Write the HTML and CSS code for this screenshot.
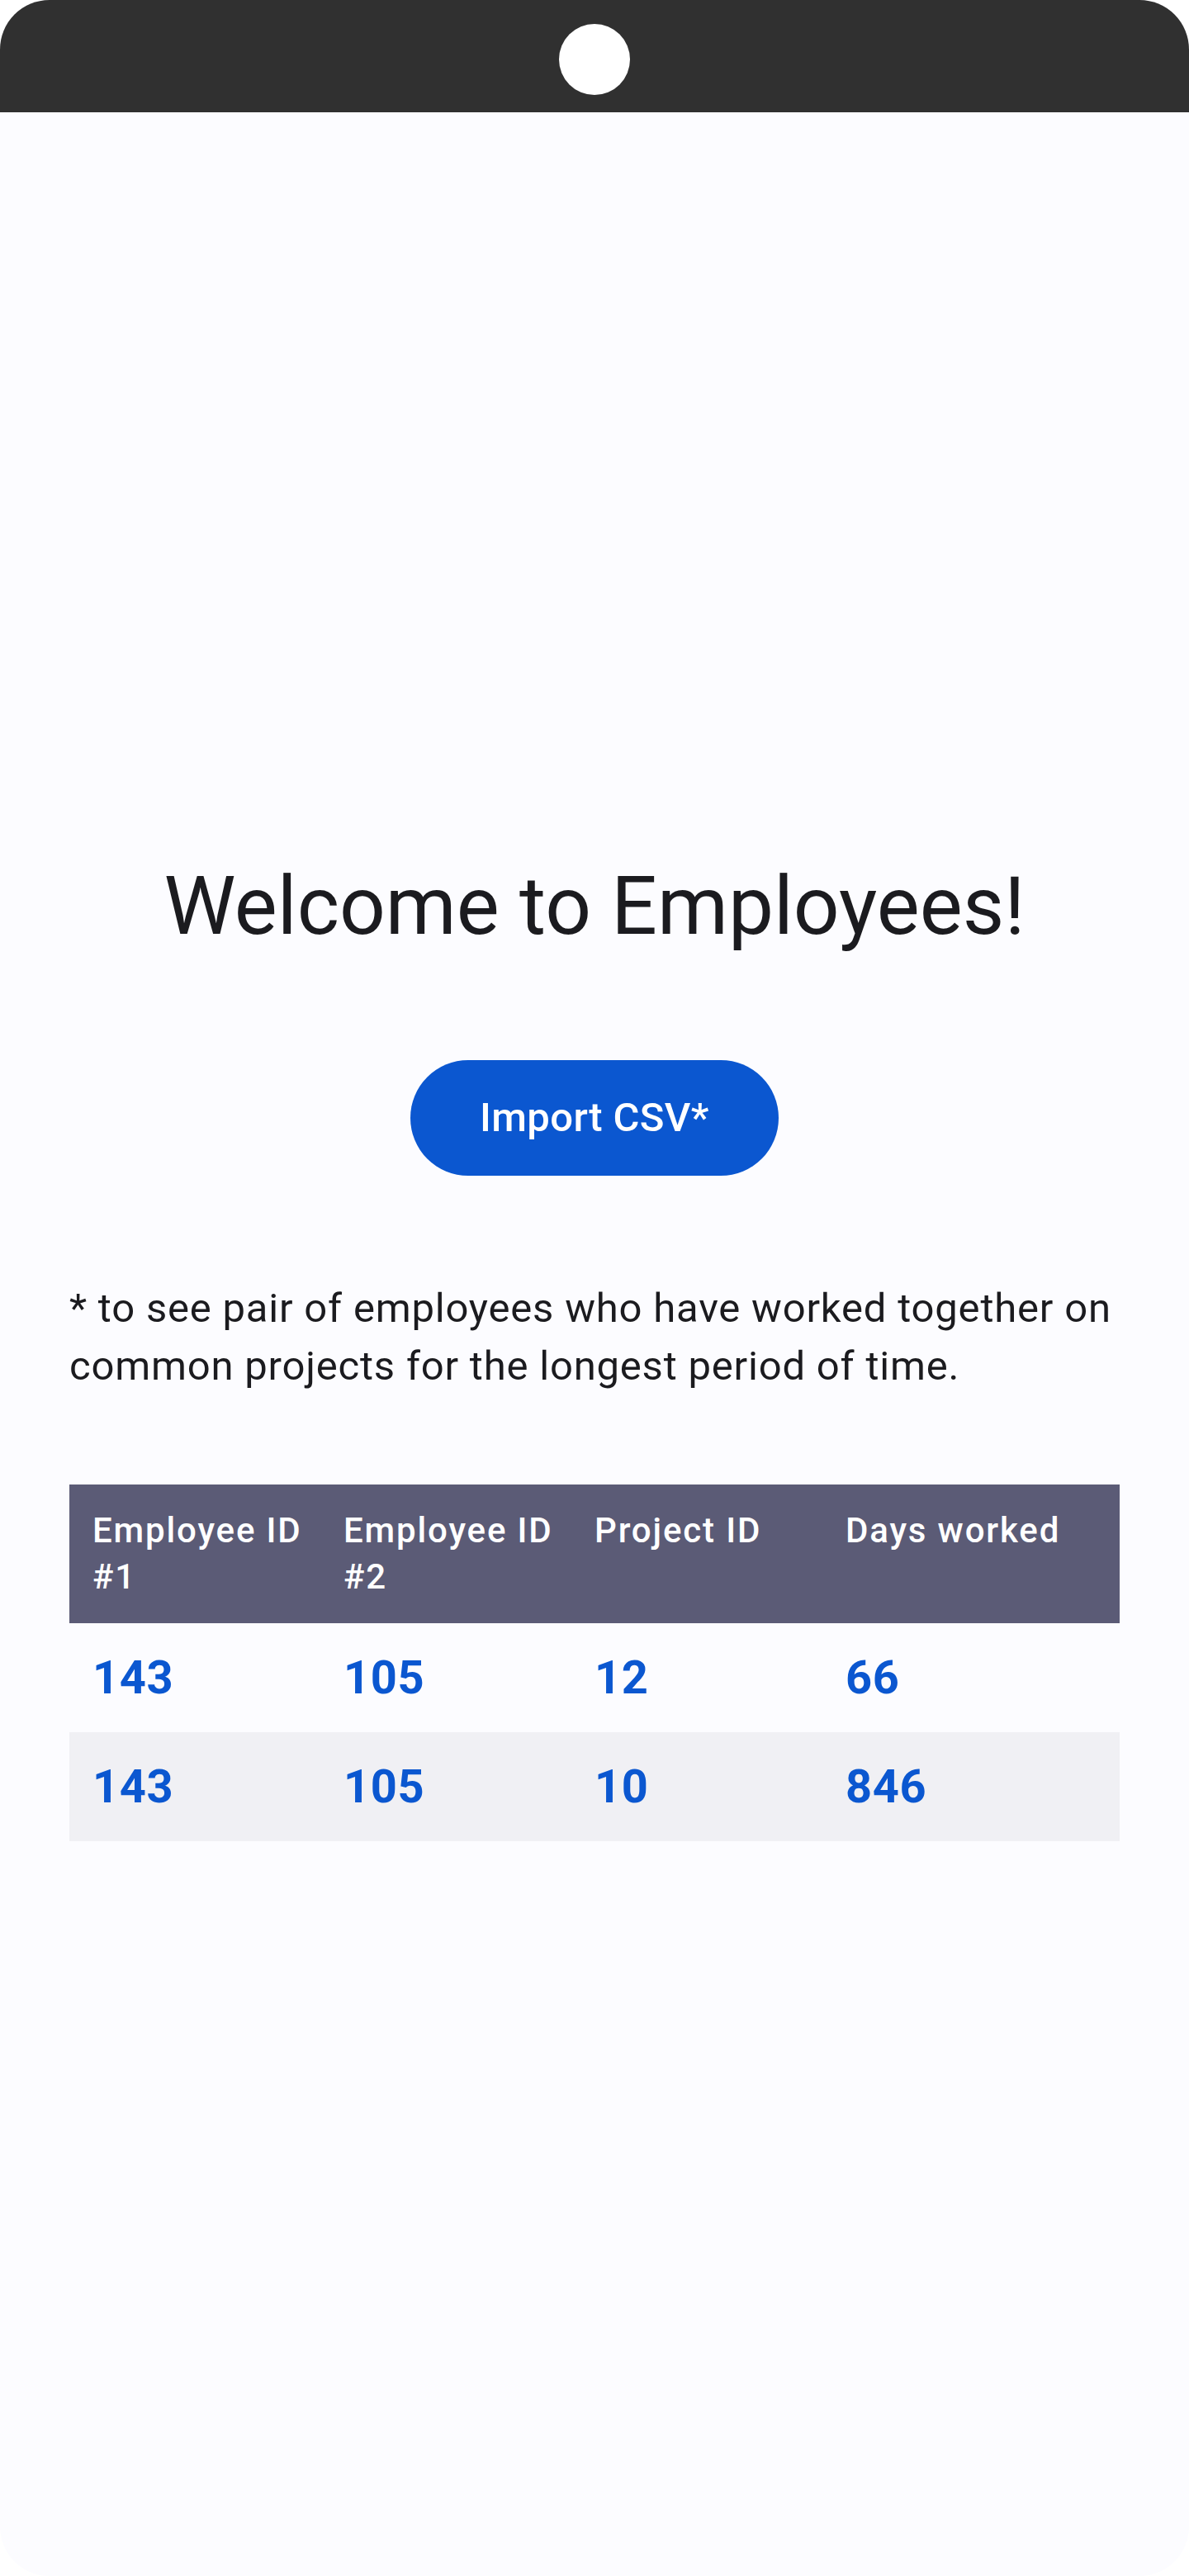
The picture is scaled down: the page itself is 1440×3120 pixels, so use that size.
FILE: index.html
```html
<!DOCTYPE html>
<html lang="en">
<head>
  <meta charset="UTF-8">
  <meta name="viewport" content="width=device-width, initial-scale=1.0">
  <title>Employees</title>
  <link rel="stylesheet" href="styles.css">
</head>
<body>
  <div class="screen">
    <div class="status-bar">
      <div class="camera"></div>
    </div>
    <main class="content">
      <h1 class="title">Welcome to Employees!</h1>
      <button class="import-btn">Import CSV*</button>
      <p class="note">* to see pair of employees who have worked together on common projects for the longest period of time.</p>
      <div class="table">
        <div class="row head">
          <div class="cell">Employee ID #1</div>
          <div class="cell">Employee ID #2</div>
          <div class="cell">Project ID</div>
          <div class="cell">Days worked</div>
        </div>
        <div class="row">
          <div class="cell">143</div>
          <div class="cell">105</div>
          <div class="cell">12</div>
          <div class="cell">66</div>
        </div>
        <div class="row alt">
          <div class="cell">143</div>
          <div class="cell">105</div>
          <div class="cell">10</div>
          <div class="cell">846</div>
        </div>
      </div>
    </main>
  </div>
</body>
</html>
```

FILE: styles.css
```css
body {
  margin: 0;
  background-color: white;
  font-family: Roboto, "Noto Sans", sans-serif;
}
.screen {
  width: 1440px;
  height: 3120px;
  border-radius: 60px;
  overflow: hidden;
  background-color: #fcfcff;
  display: flex;
  flex-direction: column;
}
.status-bar {
  height: 136px;
  background-color: #303030;
  display: flex;
  justify-content: center;
  align-items: center;
  flex-shrink: 0;
}
.camera {
  width: 86px;
  height: 86px;
  margin-top: 8px;
  border-radius: 50%;
  background-color: white;
}
.content {
  flex: 1;
  display: flex;
  flex-direction: column;
  justify-content: center;
  align-items: center;
  padding: 8px 84px 0;
}
.title {
  font-size: 98px;
  font-weight: 400;
  line-height: 126px;
  color: #1b1b1f;
  margin: 0 0 123px;
}
.import-btn {
  height: 140px;
  padding: 0 84px;
  border: none;
  border-radius: 70px;
  background-color: #0b57d0;
  color: white;
  font-family: Roboto, sans-serif;
  font-size: 49px;
  font-weight: 500;
  letter-spacing: 0.35px;
  cursor: pointer;
}
.note {
  align-self: stretch;
  margin: 126px 0 108px;
  font-size: 49px;
  line-height: 70px;
  letter-spacing: 0.8px;
  color: #1b1b1f;
}
.table {
  align-self: stretch;
}
.row {
  display: grid;
  grid-template-columns: repeat(4, 1fr);
  padding: 0 28px;
  height: 132px;
  align-items: center;
  font-size: 56px;
  font-weight: 700;
  color: #0b57d0;
  letter-spacing: 0.6px;
}
.row.head {
  height: 168px;
  align-items: start;
  padding-top: 28px;
  box-sizing: border-box;
  background-color: #5b5b76;
  color: white;
  font-size: 42px;
  font-weight: 500;
  line-height: 56px;
  letter-spacing: 1.85px;
}
.head .cell {
  padding-right: 20px;
}
.row.alt {
  background-color: #f0f0f4;
}
```
